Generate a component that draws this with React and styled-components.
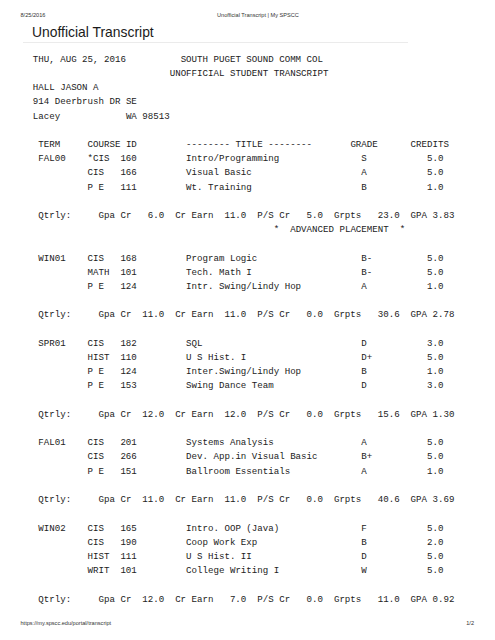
import * as React from "react"
import styled, {createGlobalStyle} from 'styled-components';

const GlobalStyle = createGlobalStyle`
  html, body {
    margin: 0;
    padding: 0;
    background: #ffffff;
  }
`;

const terms = [
    {
        term: 'FAL00',
        courses: [
            ['*CIS', '160', 'Intro/Programming', 'S', '5.0'],
            ['CIS', '166', 'Visual Basic', 'A', '5.0'],
            ['P E', '111', 'Wt. Training', 'B', '1.0'],
        ],
        qtrly: ['6.0', '11.0', '5.0', '23.0', '3.83'],
        note: '*  ADVANCED PLACEMENT  *',
    },
    {
        term: 'WIN01',
        courses: [
            ['CIS', '168', 'Program Logic', 'B-', '5.0'],
            ['MATH', '101', 'Tech. Math I', 'B-', '5.0'],
            ['P E', '124', 'Intr. Swing/Lindy Hop', 'A', '1.0'],
        ],
        qtrly: ['11.0', '11.0', '0.0', '30.6', '2.78'],
    },
    {
        term: 'SPR01',
        courses: [
            ['CIS', '182', 'SQL', 'D', '3.0'],
            ['HIST', '110', 'U S Hist. I', 'D+', '5.0'],
            ['P E', '124', 'Inter.Swing/Lindy Hop', 'B', '1.0'],
            ['P E', '153', 'Swing Dance Team', 'D', '3.0'],
        ],
        qtrly: ['12.0', '12.0', '0.0', '15.6', '1.30'],
    },
    {
        term: 'FAL01',
        courses: [
            ['CIS', '201', 'Systems Analysis', 'A', '5.0'],
            ['CIS', '266', 'Dev. App.in Visual Basic', 'B+', '5.0'],
            ['P E', '151', 'Ballroom Essentials', 'A', '1.0'],
        ],
        qtrly: ['11.0', '11.0', '0.0', '40.6', '3.69'],
    },
    {
        term: 'WIN02',
        courses: [
            ['CIS', '165', 'Intro. OOP (Java)', 'F', '5.0'],
            ['CIS', '190', 'Coop Work Exp', 'B', '2.0'],
            ['HIST', '111', 'U S Hist. II', 'D', '5.0'],
            ['WRIT', '101', 'College Writing I', 'W', '5.0'],
        ],
        qtrly: ['12.0', '7.0', '0.0', '11.0', '0.92'],
    },
];

const Stat = ({label, value, w}) => (
    <StatBox>
        <span>{label}</span>
        <StatValue $w={w}>{value}</StatValue>
    </StatBox>
);

const Term = ({data, last}) => (
    <TermBlock $last={last}>
        {data.courses.map((c, i) => (
            <CourseRow key={i}>
                <Cell>{i === 0 ? data.term : ''}</Cell>
                <Cell>{c[0]}</Cell>
                <Cell>{c[1]}</Cell>
                <Cell>{c[2]}</Cell>
                <Cell>{c[3]}</Cell>
                <Cell>{c[4]}</Cell>
            </CourseRow>
        ))}
        <Summary>
            <QtrlyLabel>Qtrly:</QtrlyLabel>
            <Stat label="Gpa Cr" value={data.qtrly[0]} w={6}/>
            <Stat label="Cr Earn" value={data.qtrly[1]} w={6}/>
            <Stat label="P/S Cr" value={data.qtrly[2]} w={6}/>
            <Stat label="Grpts" value={data.qtrly[3]} w={7}/>
            <Stat label="GPA" value={data.qtrly[4]} w={5}/>
        </Summary>
        {data.note && <Note>{data.note}</Note>}
    </TermBlock>
);

const App = () => <>
    <GlobalStyle/>
    <Page>
        <PrintHeader>
            <Small>8/25/2016</Small>
            <Small>Unofficial Transcript | My SPSCC</Small>
        </PrintHeader>
        <Title>Unofficial Transcript</Title>
        <Rule/>
        <Mono>
            <TopGrid>
                <span>THU, AUG 25, 2016</span>
                <School>SOUTH PUGET SOUND COMM COL</School>
                <span/>
                <span>UNOFFICIAL STUDENT TRANSCRIPT</span>
            </TopGrid>
            <Address>
                <Line>HALL JASON A</Line>
                <Line>914 Deerbrush DR SE</Line>
                <CityLine>
                    <span>Lacey</span>
                    <span>WA 98513</span>
                </CityLine>
            </Address>
            <HeaderRow>
                <span>TERM</span>
                <span>COURSE ID</span>
                <span>-------- TITLE --------</span>
                <span>GRADE</span>
                <span>CREDITS</span>
            </HeaderRow>
            {terms.map((t, i) => <Term key={t.term} data={t} last={i === terms.length - 1}/>)}
        </Mono>
        <Footer>
            <Small>https://my.spscc.edu/portal/transcript</Small>
            <Small>1/2</Small>
        </Footer>
    </Page>
</>

const Page = styled.div`
  width: 495px;
  min-height: 640px;
  background: #ffffff;
  color: #222222;
  display: flex;
  flex-direction: column;
`;

const PrintHeader = styled.div`
  display: grid;
  grid-template-columns: 196.5px auto;
  padding: 12px 0 0 20.5px;
`;

const Small = styled.span`
  font-family: "Liberation Sans", Arial, sans-serif;
  font-size: 5.6px;
  line-height: 7px;
  color: #333333;
  white-space: pre;
`;

const Title = styled.h1`
  margin: 4.8px 0 0 32px;
  font-family: "Liberation Sans", Arial, sans-serif;
  font-weight: normal;
  font-size: 13.9px;
  line-height: 16px;
  color: #1a1a1a;
`;

const Rule = styled.div`
  margin: 2px 0 0 23.3px;
  width: 385px;
  height: 1px;
  background: #ebebeb;
`;

const Mono = styled.div`
  margin: 10px 0 0 32.8px;
  font-family: "Liberation Mono", "DejaVu Sans Mono", monospace;
  font-size: 9.15px;
  line-height: 14.21px;
  color: #222222;
  white-space: pre;
`;

const TopGrid = styled.div`
  display: grid;
  grid-template-columns: 25ch auto;
`;

const School = styled.span`
  padding-left: 2ch;
`;

const Address = styled.div`
  margin-bottom: 14.21px;
`;

const Line = styled.div``;

const CityLine = styled.div`
  display: grid;
  grid-template-columns: 17ch auto;
`;

const HeaderRow = styled.div`
  display: grid;
  grid-template-columns: 9ch 18ch 30ch 11ch auto;
  padding-left: 1ch;
`;

const CourseRow = styled.div`
  display: grid;
  grid-template-columns: 9ch 6ch 12ch 32ch 12ch 3ch;
  padding-left: 1ch;
`;

const Cell = styled.span``;

const TermBlock = styled.div`
  margin-bottom: ${props => props.$last ? 0 : '14.21px'};
`;

const Summary = styled.div`
  display: flex;
  column-gap: 2ch;
  padding-left: 1ch;
  margin-top: 14.21px;
`;

const QtrlyLabel = styled.span`
  width: 11ch;
  margin-right: -2ch;
`;

const StatBox = styled.span`
  display: inline-flex;
`;

const StatValue = styled.span`
  display: inline-block;
  width: ${props => props.$w}ch;
  text-align: right;
`;

const Note = styled.div`
  padding-left: 44ch;
`;

const Footer = styled.div`
  display: flex;
  justify-content: space-between;
  padding: 0 21px 0 20.5px;
  margin-top: 13px;
`;

export default App;
